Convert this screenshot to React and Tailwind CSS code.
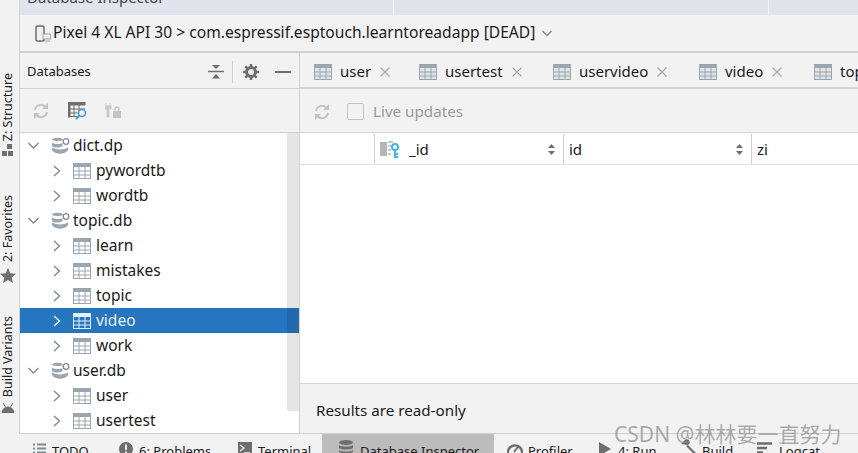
import React from 'react';

const TableIcon = ({ active, tab }) => {
  const line = active ? '#e8f0f8' : '#9aa7b0';
  const fill = active ? '#2675bf' : tab ? '#dfe3e5' : '#ffffff';
  return (
    <svg width="18" height="16" viewBox="0 0 18 16" className="shrink-0">
      <rect x="0.5" y="0.5" width="17" height="15" fill={fill} stroke={line} />
      <rect x="0" y="0" width="18" height="4" fill={line} />
      <path d="M6 4v12M12 4v12M0 8h18M0 12h18" stroke={line} strokeWidth="1" />
    </svg>
  );
};

const DbIcon = ({ color = '#9aa7b0' }) => (
  <svg width="19" height="17" viewBox="0 0 19 17" className="shrink-0">
    <path d="M1 3c0-3 11-3 11 0v0c-3 1.500-8 1.500-11 0z" fill={color} />
    <path d="M1 5.500c3 2 8 2 10.500 .5v3c-3 2-8 2-10.500 0z" fill={color} />
    <path d="M1 10.500c4 2.500 12 2.500 16 0V13c-3 5-13 5-16 0z" fill={color} />
    <circle cx="15" cy="4.500" r="2.800" fill="none" stroke="#7f8b91" strokeWidth="1.300" />
  </svg>
);

const ChevronRight = ({ color = '#7f8b91' }) => (
  <svg width="8" height="12" viewBox="0 0 8 12" className="shrink-0">
    <path d="M1 1l5.500 5L1 11" fill="none" stroke={color} strokeWidth="1.400" />
  </svg>
);

const ChevronDown = () => (
  <svg width="11" height="8" viewBox="0 0 11 8" className="shrink-0">
    <path d="M.5 1l5 5 5-5" fill="none" stroke="#7f8b91" strokeWidth="1.400" />
  </svg>
);

const Refresh = () => (
  <svg width="16" height="16" viewBox="0 0 16 16" className="shrink-0">
    <path d="M2 7a6 6 0 0 1 10.500-3M14 9a6 6 0 0 1-10.500 3" fill="none" stroke="#c4c4c4" strokeWidth="2" />
    <path d="M9 6h6V0zM7 10H1v6z" fill="#c4c4c4" />
  </svg>
);

const treeRows = [
  { label: 'dict.dp', db: true },
  { label: 'pywordtb' },
  { label: 'wordtb' },
  { label: 'topic.db', db: true },
  { label: 'learn' },
  { label: 'mistakes' },
  { label: 'topic' },
  { label: 'video', selected: true },
  { label: 'work' },
  { label: 'user.db', db: true },
  { label: 'user' },
  { label: 'usertest' },
];

const tabs = [
  { label: 'user', width: 'w-[105px]' },
  { label: 'usertest', width: 'w-[134px]' },
  { label: 'uservideo', width: 'w-[146px]' },
  { label: 'video', width: 'w-[115px]' },
  { label: 'topic', width: 'w-[100px]', noClose: true },
];

const TreeRow = ({ row }) => {
  if (row.db) {
    return (
      <div className="h-[25px] flex items-center pl-[8px] text-[#1a1a1a]">
        <span className="w-[23px] flex"><ChevronDown /></span>
        <DbIcon />
        <span className="ml-[3px]">{row.label}</span>
      </div>
    );
  }
  return (
    <div className={`h-[25px] flex items-center pl-[33px] ${row.selected ? 'bg-[#2675bf] text-[#e6eef6]' : 'text-[#1a1a1a]'}`}>
      <span className="w-[20px] flex"><ChevronRight color={row.selected ? '#ffffff' : '#7f8b91'} /></span>
      <TableIcon active={row.selected} />
      <span className="ml-[5px]">{row.label}</span>
    </div>
  );
};

const RailLabel = ({ children, className }) => (
  <span className={`[writing-mode:vertical-rl] rotate-180 text-[12.500px] leading-[19px] text-[#222] whitespace-nowrap ${className}`}>
    {children}
  </span>
);

const BottomItem = ({ icon, label, width, active }) => (
  <div className={`h-full flex items-start pt-[8px] shrink-0 ${width} ${active ? 'bg-[#bcbcbc]' : ''}`}>
    {icon}
    <span className="text-[13px] leading-[18px] whitespace-nowrap text-[#1a1a1a]">{label}</span>
  </div>
);

const SortArrows = () => (
  <svg width="7" height="11" viewBox="0 0 7 11" className="shrink-0">
    <path d="M3.500 0L7 4H0zM3.500 11L0 7h7z" fill="#6e6e6e" />
  </svg>
);

export default function App() {
  return (
    <div className="w-[858px] h-[453px] overflow-hidden relative flex flex-col bg-[#f2f2f2] font-['Noto_Sans','Open_Sans',sans-serif] text-[15px]">
      <div className="flex flex-1 min-h-0">
        {/* left rail */}
        <div className="w-[20px] shrink-0 border-r border-[#d1d1d1] flex flex-col items-center pt-[73px] pr-[4px]">
          <RailLabel>Z: Structure</RailLabel>
          <svg width="13" height="13" viewBox="0 0 13 13" className="mt-[3px] shrink-0">
            <path d="M6 0h5v5H6zM1 7h5v5H1zM7 7h5v5H7z" fill="#6e6e6e" />
          </svg>
          <RailLabel className="mt-[38px]">2: Favorites</RailLabel>
          <svg width="16" height="15" viewBox="0 0 16 15" className="mt-[6px] shrink-0">
            <path d="M8 0l2.300 5.200 5.700.5-4.300 3.700 1.300 5.600L8 12l-5 3 1.300-5.600L0 5.700l5.700-.5z" fill="#6e6e6e" />
          </svg>
          <RailLabel className="mt-[33px]">Build Variants</RailLabel>
          <svg width="14" height="10" viewBox="0 0 14 10" className="mt-[6px] shrink-0">
            <path d="M1 10a6 6 0 0 1 12 0zM2 0l2.500 4M12 0L9.500 4" fill="#6e6e6e" stroke="#6e6e6e" />
          </svg>
        </div>

        <div className="flex-1 min-w-0 flex flex-col">
          {/* title strip */}
          <div className="h-[15px] shrink-0 bg-[#e1e4ec] overflow-hidden flex">
            <div className="w-[374px] shrink-0 border-r border-[#f2f2f2] pl-[7px]">
              <span className="block -mt-[15px] leading-[24px] text-[#444]">Database Inspector</span>
            </div>
            <div className="w-[375px] shrink-0 border-r border-[#f2f2f2]"></div>
          </div>

          {/* device bar */}
          <div className="h-[38px] shrink-0 flex items-center pl-[15px] border-b-2 border-[#d1d1d1] text-[#1a1a1a] text-[15.600px]">
            <svg width="16" height="17" viewBox="0 0 16 17" className="shrink-0 mr-[2px]">
              <rect x="1" y="1" width="8" height="15" rx="1.500" fill="none" stroke="#6e6e6e" strokeWidth="1.500" />
              <rect x="8" y="9" width="7.500" height="5" fill="#f2f2f2" stroke="#9aa7b0" />
              <path d="M9 16h6" stroke="#9aa7b0" />
            </svg>
            <span className="whitespace-nowrap">Pixel 4 XL API 30 &gt; com.espressif.esptouch.learntoreadapp [DEAD]</span>
            <svg width="10" height="7" viewBox="0 0 10 7" className="ml-[7px] shrink-0">
              <path d="M.5 1L5 5.500 9.500 1" fill="none" stroke="#7f8b91" strokeWidth="1.500" />
            </svg>
          </div>

          <div className="flex-1 min-h-0 flex border-b border-[#d1d1d1]">
            {/* databases panel */}
            <div className="w-[280px] shrink-0 flex flex-col border-r border-[#d1d1d1] relative">
              <div className="h-[36px] shrink-0 flex items-center pl-[7px] pt-[2px] border-b border-[#d1d1d1]">
                <span className="w-[181px] shrink-0 text-[13px] text-[#1a1a1a]">Databases</span>
                <svg width="16" height="16" viewBox="0 0 16 16" className="shrink-0">
                  <path d="M0 7.500h16" stroke="#6e6e6e" strokeWidth="1.500" />
                  <path d="M4 1h8L8 5zM8 10l4 4.500H4z" fill="#6e6e6e" />
                </svg>
                <span className="ml-[8px] w-px h-[22px] bg-[#d1d1d1]"></span>
                <svg width="16" height="16" viewBox="0 0 16 16" className="ml-[10px] shrink-0">
                  <circle cx="8" cy="8" r="4.500" fill="none" stroke="#6e6e6e" strokeWidth="3" />
                  <path d="M8 0v3M8 13v3M0 8h3M13 8h3M2.300 2.300l2.100 2.100M11.600 11.600l2.100 2.100M2.300 13.700l2.100-2.100M11.600 4.400l2.100-2.100" stroke="#6e6e6e" strokeWidth="2.500" />
                </svg>
                <span className="ml-[16px] w-[16px] h-[2px] bg-[#6e6e6e]"></span>
              </div>
              <div className="h-[44px] shrink-0 flex items-center pl-[13px] border-b border-[#d1d1d1]">
                <Refresh />
                <svg width="20" height="18" viewBox="0 0 20 18" className="ml-[19px] shrink-0">
                  <path d="M0 0h17v3H0zM0 3h2v12H0zM2 7h15M2 11h8M6 3v12M11 3v6" fill="#6e6e6e" stroke="#6e6e6e" strokeWidth="1" />
                  <path d="M2 14.500h7" stroke="#6e6e6e" />
                  <circle cx="14" cy="11" r="3.500" fill="#f2f2f2" stroke="#389fd6" strokeWidth="1.500" />
                  <path d="M11.500 13.500L8 17" stroke="#389fd6" strokeWidth="2" />
                </svg>
                <svg width="16" height="16" viewBox="0 0 16 16" className="ml-[17px] shrink-0">
                  <path d="M1 0v3M5 0v3M0 3h6v3H4v8H2V6H0z" fill="#c9c9c9" stroke="#c9c9c9" strokeWidth="0.800" />
                  <rect x="8" y="8" width="8" height="7" fill="#c4c4c4" />
                  <path d="M10 8V6a2 2 0 0 1 4 0v2" fill="none" stroke="#c4c4c4" strokeWidth="1.300" />
                </svg>
              </div>
              <div className="flex-1 min-h-0 bg-white overflow-hidden text-[15.500px]">
                {treeRows.map((row) => <TreeRow key={row.label + (row.db ? '-db' : '')} row={row} />)}
              </div>
              {/* scrollbar */}
              <div className="absolute left-[267px] top-[80px] w-[12px] h-[278px] bg-black/10"></div>
            </div>

            {/* table panel */}
            <div className="flex-1 min-w-0 flex flex-col">
              <div className="h-[36px] shrink-0 flex items-center pl-[14px] pt-[3px] border-b-2 border-[#d6d6d6] overflow-hidden">
                {tabs.map((tab) => (
                  <div key={tab.label} className={`shrink-0 flex items-center text-[#1a1a1a] ${tab.width}`}>
                    <TableIcon tab />
                    <span className="ml-[8px]">{tab.label}</span>
                    {!tab.noClose && (
                      <svg width="10" height="10" viewBox="0 0 10 10" className="ml-[9px] shrink-0">
                        <path d="M.5.5l9 9M9.500.5l-9 9" stroke="#a8a8a8" strokeWidth="1.100" />
                      </svg>
                    )}
                  </div>
                ))}
              </div>
              <div className="h-[44px] shrink-0 flex items-center pl-[14px] pt-[2px] border-b border-[#d6d6d6]">
                <Refresh />
                <span className="ml-[17px] w-[17px] h-[17px] rounded-[2px] border border-[#c4c4c4]"></span>
                <span className="ml-[9px] text-[#9a9a9a] text-[15.200px]">Live updates</span>
              </div>
              <div className="h-[32px] shrink-0 flex bg-white border-b border-[#e3e3e3] pt-px text-[#1a1a1a]">
                <div className="w-[75px] shrink-0 border-r border-[#d1d1d1]"></div>
                <div className="w-[189px] shrink-0 border-r border-[#d1d1d1] flex items-center pl-[5px] pr-[8px]">
                  <svg width="19" height="17" viewBox="0 0 19 17" className="shrink-0">
                    <path d="M0 1h7v14H0z" fill="#b0b8bd" />
                    <path d="M8 1h5M8 5h3M8 9h3M8 13h3" stroke="#b0b8bd" strokeWidth="1.500" />
                    <circle cx="15" cy="6" r="3" fill="none" stroke="#40b6e0" strokeWidth="2" />
                    <path d="M15 9v8M15 13h3M15 16h3" stroke="#40b6e0" strokeWidth="2" />
                  </svg>
                  <span className="ml-[10px] flex-1">_id</span>
                  <SortArrows />
                </div>
                <div className="w-[188px] shrink-0 border-r border-[#d1d1d1] flex items-center pl-[5px] pr-[8px]">
                  <span className="flex-1">id</span>
                  <SortArrows />
                </div>
                <div className="flex-1 flex items-center pl-[5px]">zi</div>
              </div>
              <div className="flex-1 min-h-0 bg-white border-b border-[#d6d6d6]"></div>
              <div className="h-[49px] shrink-0 flex items-center pl-[16px] pt-[4px] text-[#1a1a1a] text-[15.200px]">Results are read-only</div>
            </div>
          </div>
        </div>
      </div>

      {/* bottom tool strip */}
      <div className="h-[19px] shrink-0 flex pl-[33px] overflow-hidden">
        <BottomItem
          width="w-[86px]"
          label="TODO"
          icon={
            <svg width="13" height="11" viewBox="0 0 13 11" className="mr-[6px] mt-[1px] shrink-0">
              <path d="M0 1.500h2M4 1.500h9M0 5.500h2M4 5.500h9M0 9.500h2M4 9.500h9" stroke="#7f8b91" strokeWidth="2" />
            </svg>
          }
        />
        <BottomItem
          width="w-[119px]"
          label="6: Problems"
          icon={
            <svg width="14" height="14" viewBox="0 0 14 14" className="mr-[6px] shrink-0">
              <circle cx="7" cy="7" r="7" fill="#6e6e6e" />
              <path d="M7 2.500v5.500M7 9.500v2" stroke="#f2f2f2" strokeWidth="2" />
            </svg>
          }
        />
        <BottomItem
          width="w-[84px]"
          label="Terminal"
          icon={
            <svg width="14" height="14" viewBox="0 0 14 14" className="mr-[6px] shrink-0">
              <rect width="14" height="14" fill="#6e6e6e" />
              <path d="M2 3l4 3-4 3M6 11h6" fill="none" stroke="#f2f2f2" strokeWidth="1.300" />
            </svg>
          }
        />
        <BottomItem
          width="w-[172px] pl-[17px]"
          active
          label="Database Inspector"
          icon={
            <svg width="14" height="14" viewBox="0 0 14 14" className="mr-[7px] -mt-[2px] shrink-0">
              <ellipse cx="7" cy="2.500" rx="7" ry="2.500" fill="#6e6e6e" />
              <path d="M0 5c2 2 12 2 14 0v3c-2 2-12 2-14 0zM0 10c2 2 12 2 14 0v2c-2 2-12 2-14 0z" fill="#6e6e6e" />
            </svg>
          }
        />
        <BottomItem
          width="w-[105px] pl-[13px]"
          label="Profiler"
          icon={
            <svg width="16" height="14" viewBox="0 0 16 14" className="mr-[5px] mt-[1px] shrink-0">
              <path d="M2 13a7 7 0 1 1 12 0" fill="none" stroke="#6e6e6e" strokeWidth="2.500" />
              <path d="M7 9l4-5" stroke="#6e6e6e" strokeWidth="2" />
            </svg>
          }
        />
        <BottomItem
          width="w-[82px]"
          label="4: Run"
          icon={
            <svg width="12" height="14" viewBox="0 0 12 14" className="mr-[7px] shrink-0">
              <path d="M0 0l12 7-12 7z" fill="#6e6e6e" />
            </svg>
          }
        />
        <BottomItem
          width="w-[76px]"
          label="Build"
          icon={
            <svg width="16" height="14" viewBox="0 0 16 14" className="mr-[5px] -mt-[3px] shrink-0">
              <path d="M0 5l5-5 3 1 1 3-2 2zM7 6l8 8h-3L5 7z" fill="#6e6e6e" />
            </svg>
          }
        />
        <BottomItem
          width="w-[90px]"
          label="Logcat"
          icon={
            <svg width="15" height="12" viewBox="0 0 15 12" className="mr-[7px] shrink-0">
              <path d="M0 1.500h15M0 6h10M0 10.500h6" stroke="#6e6e6e" strokeWidth="2.500" />
            </svg>
          }
        />
      </div>

      {/* watermark */}
      <span className="absolute left-[614px] top-[421px] text-[21px] leading-[26px] text-[#8a8a8a]/70 whitespace-nowrap font-['Noto_Sans','Noto_Sans_CJK_SC',sans-serif]">
        CSDN @林林要一直努力
      </span>
    </div>
  );
}
